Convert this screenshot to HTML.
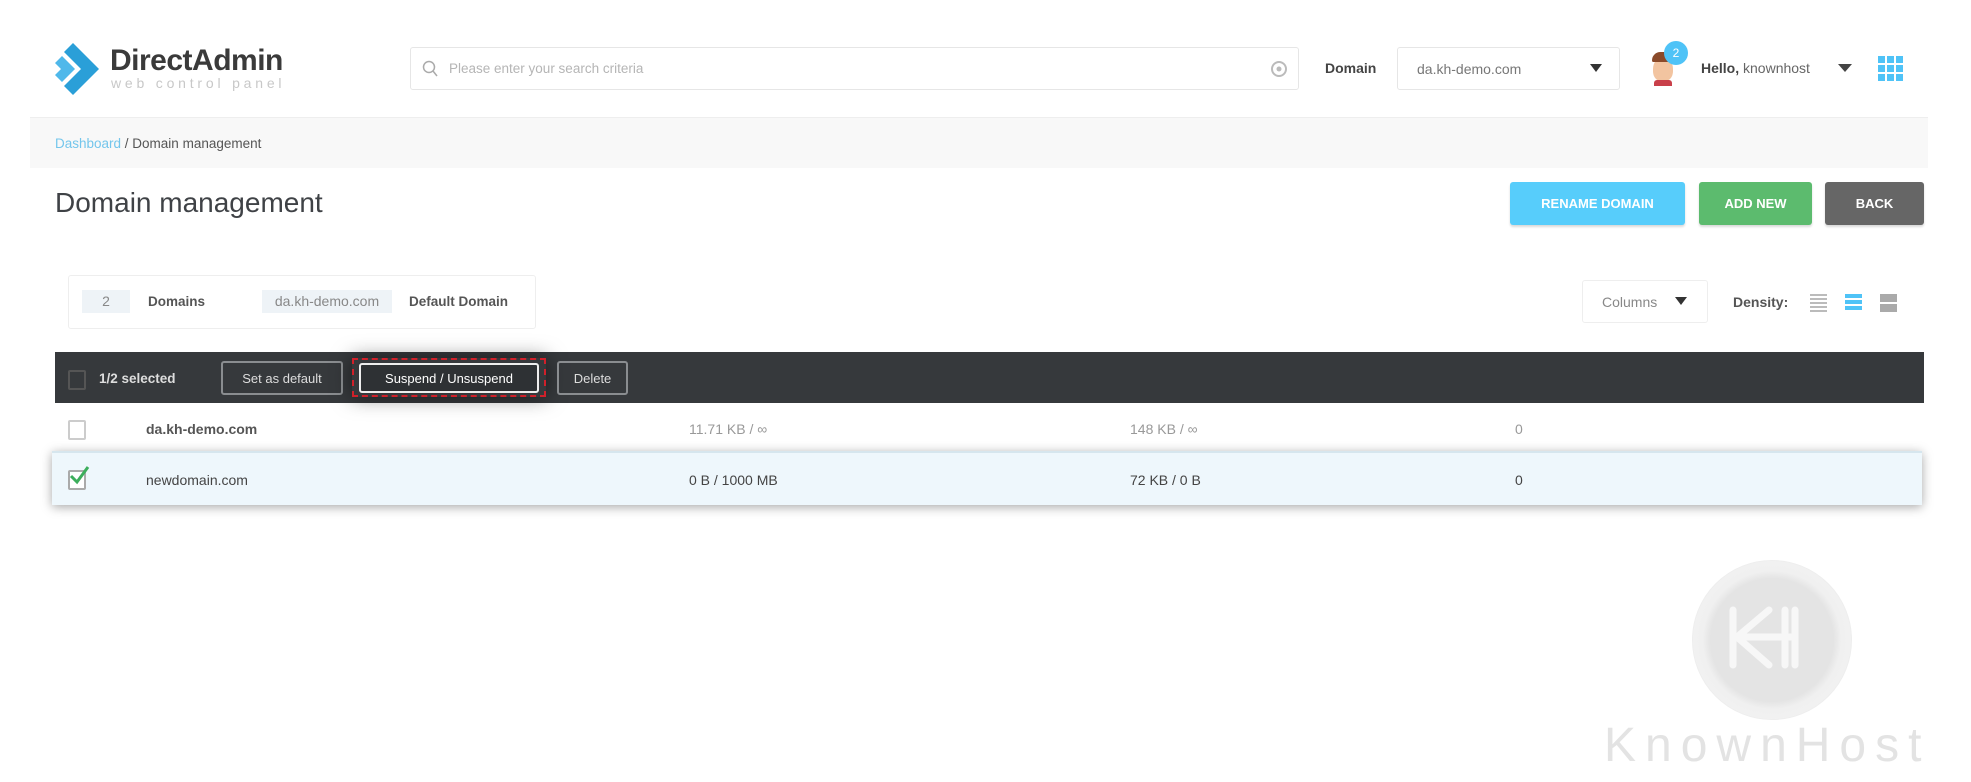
<!DOCTYPE html>
<html><head><style>
*{margin:0;padding:0;box-sizing:border-box}
body{width:1971px;height:782px;background:#fff;font-family:"Liberation Sans",sans-serif;position:relative;overflow:hidden;color:#444}
.a{position:absolute}
.t{font-size:14px;white-space:nowrap}
.btn{position:absolute;color:#fff;font-weight:bold;font-size:13px;display:flex;align-items:center;justify-content:center;border-radius:3px}
.ob{position:absolute;border:2px solid #8a8d90;border-radius:3px;color:#ddd;font-size:13px;display:flex;align-items:center;justify-content:center}
.cb{position:absolute;width:18px;height:20px;border:2px solid #ccc;border-radius:2px;background:#fff}
</style></head><body>
<!-- logo -->
<svg class="a" style="left:53px;top:43px" width="50" height="54" viewBox="0 0 50 54">
<path d="M20 0 L46 26 L20 52 L11 43 L28 26 L11 9Z" fill="#2a9fd8"/>
<path d="M2 20 L9 13 L22 26 L9 39 L2 32 L8 26Z" fill="#4fb8ea"/>
</svg>
<div class="a" style="left:110px;top:44px;font-size:30px;font-weight:bold;color:#3a3a3a;letter-spacing:-0.5px">DirectAdmin</div>
<div class="a" style="left:111px;top:75px;font-size:14px;color:#c8c8c8;letter-spacing:3.8px">web control panel</div>
<!-- search -->
<div class="a" style="left:410px;top:47px;width:889px;height:43px;border:1px solid #e6e6e6;border-radius:3px"></div>
<svg class="a" style="left:422px;top:60px" width="16" height="18"><circle cx="7" cy="7" r="5.5" stroke="#aaa" stroke-width="1.5" fill="none"/><path d="M11 11 L15 16" stroke="#aaa" stroke-width="1.5"/></svg>
<div class="a t" style="left:449px;top:61px;color:#b5b5b5;font-size:13.5px">Please enter your search criteria</div>
<svg class="a" style="left:1270px;top:60px" width="18" height="18"><circle cx="9" cy="9" r="7" stroke="#bbb" stroke-width="2" fill="none"/><circle cx="9" cy="9" r="2.5" fill="#bbb"/></svg>
<div class="a t" style="left:1325px;top:60px;font-weight:bold;color:#444">Domain</div>
<div class="a" style="left:1397px;top:47px;width:223px;height:43px;border:1px solid #e6e6e6;border-radius:3px"></div>
<div class="a t" style="left:1417px;top:61px;color:#777">da.kh-demo.com</div>
<div class="a" style="left:1590px;top:64px;border-left:6px solid transparent;border-right:6px solid transparent;border-top:8px solid #333"></div>
<!-- avatar -->
<div class="a" style="left:1653px;top:57px;width:20px;height:24px;border-radius:50% 50% 40% 40%;background:#f2c4a0"></div>
<div class="a" style="left:1652px;top:52px;width:20px;height:10px;border-radius:10px 10px 2px 2px;background:#8a4a2a"></div>
<div class="a" style="left:1654px;top:80px;width:18px;height:6px;background:#c9404a;border-radius:3px 3px 0 0"></div>
<div class="a" style="left:1664px;top:41px;width:24px;height:24px;border-radius:50%;background:#4fc3f7;color:#fff;font-size:12px;text-align:center;line-height:24px">2</div>
<div class="a t" style="left:1701px;top:60px;color:#666"><b style="color:#444">Hello,</b> knownhost</div>
<div class="a" style="left:1838px;top:64px;border-left:7px solid transparent;border-right:7px solid transparent;border-top:8px solid #444"></div>
<svg class="a" style="left:1878px;top:56px" width="26" height="26"><g fill="#4fc3f7">
<rect x="0" y="0" width="7" height="7"/><rect x="9" y="0" width="7" height="7"/><rect x="18" y="0" width="7" height="7"/>
<rect x="0" y="9" width="7" height="7"/><rect x="9" y="9" width="7" height="7"/><rect x="18" y="9" width="7" height="7"/>
<rect x="0" y="18" width="7" height="7"/><rect x="9" y="18" width="7" height="7"/><rect x="18" y="18" width="7" height="7"/></g></svg>
<!-- breadcrumb band -->
<div class="a" style="left:30px;top:117px;width:1898px;height:51px;background:#f8f8f8;border-top:1px solid #eee"></div>
<div class="a t" style="left:55px;top:136px;font-size:13.5px;color:#555"><span style="color:#74c6ec">Dashboard</span> / Domain management</div>
<div class="a" style="left:55px;top:187px;font-size:28px;color:#3f4246">Domain management</div>
<div class="btn" style="left:1510px;top:182px;width:175px;height:43px;background:#57cdfb;box-shadow:0 2px 2px rgba(0,0,0,.15)">RENAME DOMAIN</div>
<div class="btn" style="left:1699px;top:182px;width:113px;height:43px;background:#5cbb6e;box-shadow:0 2px 2px rgba(0,0,0,.15)">ADD NEW</div>
<div class="btn" style="left:1825px;top:182px;width:99px;height:43px;background:#666;box-shadow:0 2px 2px rgba(0,0,0,.15)">BACK</div>
<!-- info -->
<div class="a" style="left:68px;top:275px;width:468px;height:54px;border:1px solid #eee;border-radius:3px"></div>
<div class="a t" style="left:82px;top:290px;width:48px;height:23px;background:#eef3f7;text-align:center;line-height:23px;color:#888">2</div>
<div class="a t" style="left:148px;top:294px;font-weight:bold;color:#555;font-size:13.5px">Domains</div>
<div class="a t" style="left:262px;top:290px;width:130px;height:23px;background:#eef3f7;text-align:center;line-height:23px;color:#888">da.kh-demo.com</div>
<div class="a t" style="left:409px;top:294px;font-weight:bold;color:#555;font-size:13.5px">Default Domain</div>
<div class="a" style="left:1582px;top:280px;width:126px;height:43px;border:1px solid #eee;border-radius:3px"></div>
<div class="a t" style="left:1602px;top:294px;color:#888">Columns</div>
<div class="a" style="left:1675px;top:297px;border-left:6px solid transparent;border-right:6px solid transparent;border-top:8px solid #333"></div>
<div class="a t" style="left:1733px;top:294px;font-weight:bold;color:#555">Density:</div>
<div class="a" style="left:1810px;top:294px;width:17px;height:18px;background:repeating-linear-gradient(#bbb 0 2px,#fff 2px 4px)"></div>
<div class="a" style="left:1845px;top:294px;width:17px;height:18px;background:repeating-linear-gradient(#4fc3f7 0 4px,#fff 4px 6px)"></div>
<div class="a" style="left:1880px;top:294px;width:17px;height:18px;background:linear-gradient(#aaa 0 8px,#fff 8px 10px,#aaa 10px)"></div>
<!-- dark bar -->
<div class="a" style="left:55px;top:352px;width:1869px;height:51px;background:#36393c"></div>
<div class="a" style="left:68px;top:370px;width:18px;height:20px;border:2px solid #555;border-radius:2px"></div>
<div class="a t" style="left:99px;top:371px;color:#ddd;font-weight:bold;font-size:13.5px">1/2 selected</div>
<div class="ob" style="left:221px;top:361px;width:122px;height:34px">Set as default</div>
<div class="a" style="left:352px;top:358px;width:194px;height:39px;border:2px dashed #d0202a;box-shadow:0 0 20px rgba(0,0,0,.5)"></div>
<div class="ob" style="left:359px;top:363px;width:180px;height:30px;border-color:#eee;color:#fff;background:#2e3134">Suspend / Unsuspend</div>
<div class="ob" style="left:557px;top:361px;width:71px;height:34px">Delete</div>
<!-- row1 -->
<div class="cb" style="left:68px;top:420px"></div>
<div class="a t" style="left:146px;top:421px;font-weight:bold;color:#555">da.kh-demo.com</div>
<div class="a t" style="left:689px;top:421px;color:#999">11.71 KB / ∞</div>
<div class="a t" style="left:1130px;top:421px;color:#999">148 KB / ∞</div>
<div class="a t" style="left:1515px;top:421px;color:#999">0</div>
<!-- row2 -->
<div class="a" style="left:52px;top:451px;width:1870px;height:54px;background:#eef7fc;border-top:2px solid #d6e6ee;box-shadow:0 2px 10px rgba(0,0,0,.35)"></div>
<div class="cb" style="left:68px;top:470px;border-color:#aaa"></div>
<svg class="a" style="left:68px;top:464px" width="24" height="22"><path d="M3 12 L9 18 L20 3" stroke="#3cae5c" stroke-width="3" fill="none"/></svg>
<div class="a t" style="left:146px;top:472px;color:#444">newdomain.com</div>
<div class="a t" style="left:689px;top:472px;color:#444">0 B / 1000 MB</div>
<div class="a t" style="left:1130px;top:472px;color:#444">72 KB / 0 B</div>
<div class="a t" style="left:1515px;top:472px;color:#444">0</div>
<!-- watermark -->
<div class="a" style="left:1692px;top:560px;width:160px;height:160px;border-radius:50%;background:radial-gradient(circle,#e4e4e4 55%,#f0f0f0 62%,#f6f6f6 100%);border:1px solid #eee"></div>
<svg class="a" style="left:1725px;top:605px" width="95" height="70"><g stroke="#f7f7f7" stroke-width="7" fill="none" stroke-linecap="round"><path d="M8 5 V60 M60 5 V60 M70 5 V60 M12 32 H68 M12 32 L44 60 M12 32 L44 5"/></g></svg>
<div class="a" style="left:1604px;top:718px;font-size:48px;color:#e3e3e3;letter-spacing:9px;font-weight:normal">KnownHost</div>
</body></html>
